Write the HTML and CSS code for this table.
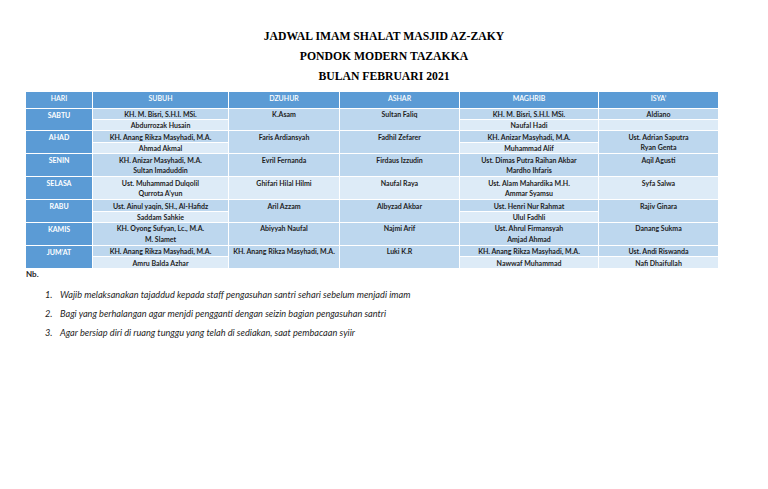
FILE: index.html
```html
<!DOCTYPE html>
<html>
<head>
<meta charset="utf-8">
<link rel="stylesheet" href="styles.css">
</head>
<body>
<div class="page">
  <div class="title">
    <div>JADWAL IMAM SHALAT MASJID AZ-ZAKY</div>
    <div>PONDOK MODERN TAZAKKA</div>
    <div>BULAN FEBRUARI 2021</div>
  </div>

  <div class="table">
    <div class="row head">
      <div class="hc">HARI</div>
      <div class="hc">SUBUH</div>
      <div class="hc">DZUHUR</div>
      <div class="hc">ASHAR</div>
      <div class="hc">MAGHRIB</div>
      <div class="hc">ISYA’</div>
    </div>

    <div class="row">
      <div class="day">SABTU</div>
      <div class="col"><div class="sub dark">KH. M. Bisri, S.H.I. MSi.</div><div class="sub light">Abdurrozak Husain</div></div>
      <div class="col"><div class="sub dark">K.Asam</div></div>
      <div class="col"><div class="sub dark">Sultan Faliq</div></div>
      <div class="col"><div class="sub dark">KH. M. Bisri, S.H.I. MSi.</div><div class="sub light">Naufal Hadi</div></div>
      <div class="col"><div class="sub dark">Aldiano</div><div class="sub light"></div></div>
    </div>

    <div class="row">
      <div class="day">AHAD</div>
      <div class="col"><div class="sub dark">KH. Anang Rikza Masyhadi, M.A.</div><div class="sub light">Ahmad Akmal</div></div>
      <div class="col"><div class="sub dark">Faris Ardiansyah</div></div>
      <div class="col"><div class="sub dark">Fadhil Zefarer</div></div>
      <div class="col"><div class="sub dark">KH. Anizar Masyhadi, M.A.</div><div class="sub light">Muhammad Alif</div></div>
      <div class="col"><div class="sub dark">Ust. Adrian Saputra<br>Ryan Genta</div></div>
    </div>

    <div class="row">
      <div class="day">SENIN</div>
      <div class="col"><div class="sub dark">KH. Anizar Masyhadi, M.A.<br>Sultan Imaduddin</div></div>
      <div class="col"><div class="sub dark">Evril Fernanda</div></div>
      <div class="col"><div class="sub dark">Firdaus Izzudin</div></div>
      <div class="col"><div class="sub dark">Ust. Dimas Putra Raihan Akbar<br>Mardho Ihfaris</div></div>
      <div class="col"><div class="sub dark">Aqil Agusti</div></div>
    </div>

    <div class="row">
      <div class="day">SELASA</div>
      <div class="col"><div class="sub light">Ust. Muhammad Dulqolil<br>Qurrota A’yun</div></div>
      <div class="col"><div class="sub light">Ghifari Hilal Hilmi</div></div>
      <div class="col"><div class="sub light">Naufal Raya</div></div>
      <div class="col"><div class="sub light">Ust. Alam Mahardika M.H.<br>Ammar Syamsu</div></div>
      <div class="col"><div class="sub light">Syfa Salwa</div></div>
    </div>

    <div class="row">
      <div class="day">RABU</div>
      <div class="col"><div class="sub dark">Ust. Ainul yaqin, SH., Al-Hafidz</div><div class="sub light">Saddam Sahkie</div></div>
      <div class="col"><div class="sub dark">Aril Azzam</div></div>
      <div class="col"><div class="sub dark">Albyzad Akbar</div></div>
      <div class="col"><div class="sub dark">Ust. Henri Nur Rahmat</div><div class="sub light">Ulul Fadhli</div></div>
      <div class="col"><div class="sub dark">Rajiv Ginara</div></div>
    </div>

    <div class="row">
      <div class="day">KAMIS</div>
      <div class="col"><div class="sub dark">KH. Oyong Sufyan, Lc., M.A.<br>M. Slamet</div></div>
      <div class="col"><div class="sub dark">Abiyyah Naufal</div></div>
      <div class="col"><div class="sub dark">Najmi Arif</div></div>
      <div class="col"><div class="sub dark">Ust. Ahrul Firmansyah<br>Amjad Ahmad</div></div>
      <div class="col"><div class="sub dark">Danang Sukma</div></div>
    </div>

    <div class="row">
      <div class="day">JUM’AT</div>
      <div class="col"><div class="sub dark">KH. Anang Rikza Masyhadi, M.A.</div><div class="sub light">Amru Balda Azhar</div></div>
      <div class="col"><div class="sub dark">KH. Anang Rikza Masyhadi, M.A.</div></div>
      <div class="col"><div class="sub dark">Luki K.R</div></div>
      <div class="col"><div class="sub dark">KH. Anang Rikza Masyhadi, M.A.</div><div class="sub light">Nawwaf Muhammad</div></div>
      <div class="col"><div class="sub dark">Ust. Andi Riswanda</div><div class="sub light">Nafi Dhaifullah</div></div>
    </div>
  </div>

  <div class="notes">
    <div class="nb">Nb.</div>
    <ol class="list">
      <li>Wajib melaksanakan tajaddud kepada staff pengasuhan santri sehari sebelum menjadi imam</li>
      <li>Bagi yang berhalangan agar menjdi pengganti dengan seizin bagian pengasuhan santri</li>
      <li>Agar bersiap diri di ruang tunggu yang telah di sediakan, saat pembacaan syiir</li>
    </ol>
  </div>
</div>
</body>
</html>
```

FILE: styles.css
```css
html, body {
  margin: 0;
  padding: 0;
  background: #ffffff;
}

.page {
  padding: 27px 0 0 26px;
  width: 692px;
}

.title {
  font-family: "Liberation Serif", "Times New Roman", serif;
  font-weight: bold;
  font-size: 11.7px;
  line-height: 20px;
  text-align: center;
  color: #000;
  width: 716px;
}

.table {
  margin-top: 5px;
  display: flex;
  flex-direction: column;
  gap: 1px;
  background: #ffffff;
  font-family: Lato, "Liberation Sans", sans-serif;
  font-weight: bold;
  font-size: 7px;
  color: #1e1e1e;
}

.row {
  display: grid;
  grid-template-columns: 66px 135px 110px 119px 138px 119px;
  column-gap: 1px;
  height: 21.9px;
}

.row.head {
  height: 15.5px;
}

.hc {
  background: #5b9bd5;
  color: #ffffff;
  text-align: center;
  line-height: 12px;
  font-weight: 600;
}

.day {
  background: #5b9bd5;
  color: #ffffff;
  text-align: center;
  line-height: 12px;
}

.col {
  display: flex;
  flex-direction: column;
  gap: 1px;
  min-height: 0;
}

.sub {
  flex: 1 1 0;
  min-height: 0;
  text-align: center;
  line-height: 10.5px;
  padding-top: 0.5px;
  overflow: visible;
  white-space: nowrap;
}

.dark {
  background: #bdd7ee;
}

.light {
  background: #ddebf7;
}

.notes {
  font-family: Lato, "Liberation Sans", sans-serif;
  font-size: 9.2px;
  color: #1e1e1e;
}

.nb {
  font-weight: bold;
  font-size: 8px;
  margin-top: 1px;
  line-height: 10px;
}

.list {
  margin: 0;
  padding: 0 0 0 34px;
  font-style: italic;
  list-style: none;
  counter-reset: item;
}

.list li {
  counter-increment: item;
  position: relative;
  line-height: 10px;
  margin-top: 9px;
}

.list li:first-child {
  margin-top: 11px;
}

.list li::before {
  content: counter(item) ".";
  position: absolute;
  left: -15px;
}
```
